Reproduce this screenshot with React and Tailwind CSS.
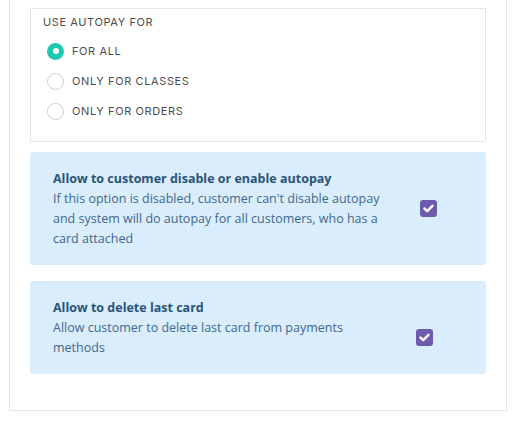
import React from "react";

function Radio({ checked, label }) {
  return (
    <div className="flex h-[30px] items-center gap-2 pl-1">
      {checked ? (
        <span className="flex h-[17px] w-[17px] items-center justify-center rounded-full bg-[#1ec9b1]">
          <span className="h-[6px] w-[6px] rounded-full bg-white" />
        </span>
      ) : (
        <span className="h-[17px] w-[17px] rounded-full border border-[#cfcfcf] bg-white" />
      )}
      <span className="text-[11px] leading-4 tracking-[0.6px] text-[#4d4d4d] [font-family:Inter,sans-serif]">
        {label}
      </span>
    </div>
  );
}

function CheckCard({ title, desc, shift }) {
  return (
    <div className="flex items-start rounded-[3px] bg-[#d9edfc] py-4 pl-[23px] pr-[23px]">
      <div className="w-[340px] [font-family:'Open_Sans',sans-serif]">
        <div className="text-[12.5px] font-bold leading-[21px] text-[#2a5478]">{title}</div>
        <div className="text-[12.5px] leading-5 text-[#41698c]">{desc}</div>
      </div>
      <div className={shift ? "flex flex-1 justify-center pr-2 pt-8" : "flex flex-1 justify-center pt-8"}>
        <span className="flex h-[17px] w-[17px] items-center justify-center rounded-[3px] bg-[#6c5aac]">
          <svg width="11" height="9" viewBox="0 0 11 9">
            <path d="M1.5 4.6 L4.2 7.2 L9.5 1.8" fill="none" stroke="white" strokeWidth="2.4" strokeLinecap="round" strokeLinejoin="round" />
          </svg>
        </span>
      </div>
    </div>
  );
}

export default function App() {
  return (
    <div className="min-h-[424px] bg-white">
      <div className="ml-[9px] w-[498px] border-x border-b border-[#e6e6e6] px-5 pb-9 pt-2">
        <div className="border border-[#e6e6e6] px-3 pb-[15px] pt-[5px]">
          <div className="text-[11px] leading-4 tracking-[0.6px] text-[#4d4d4d] [font-family:Inter,sans-serif]">
            USE AUTOPAY FOR
          </div>
          <div className="mt-[6px]">
            <Radio checked label="FOR ALL" />
            <Radio label="ONLY FOR CLASSES" />
            <Radio label="ONLY FOR ORDERS" />
          </div>
        </div>
        <div className="mt-[10px]">
          <CheckCard
            title="Allow to customer disable or enable autopay"
            desc="If this option is disabled, customer can't disable autopay and system will do autopay for all customers, who has a card attached"
          />
        </div>
        <div className="mt-4">
          <CheckCard
            shift
            title="Allow to delete last card"
            desc="Allow customer to delete last card from payments methods"
          />
        </div>
      </div>
    </div>
  );
}
